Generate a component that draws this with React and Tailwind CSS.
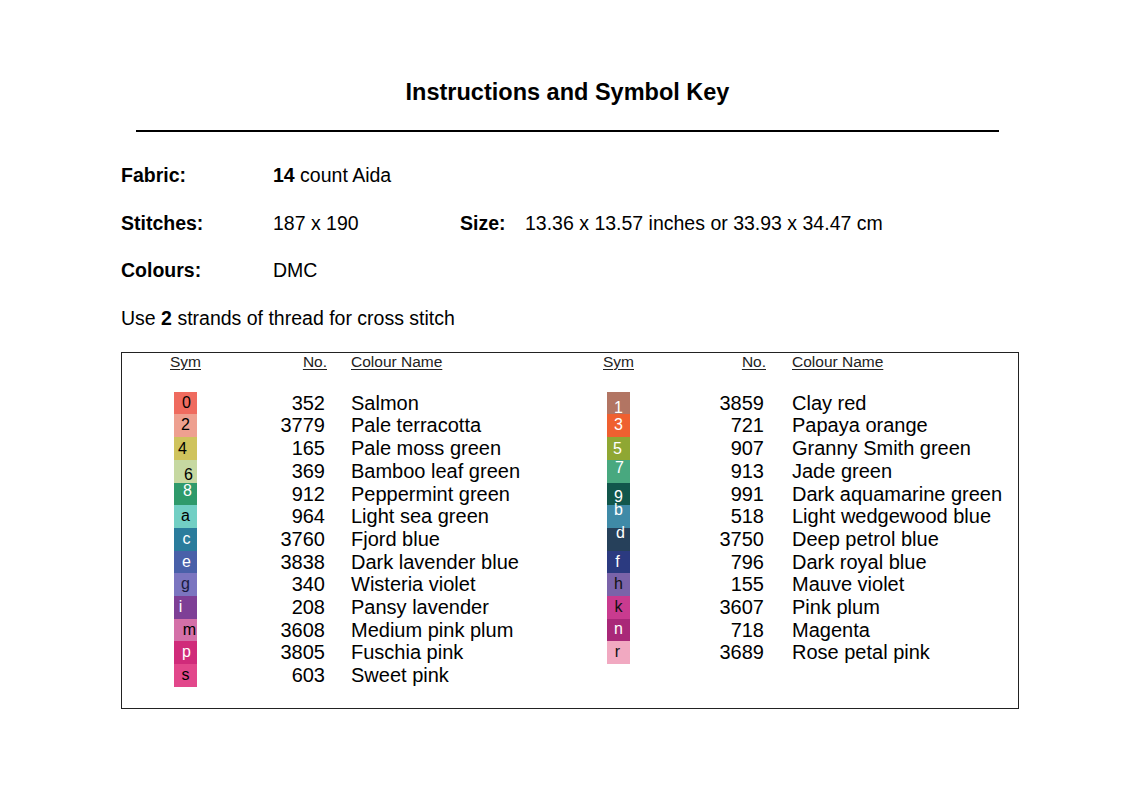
import React from "react";

const left = [
  { s: "0", bg: "bg-[#ef6b5f]", fg: "text-black", n: "352", name: "Salmon", off: "translate-x-[1px]" },
  { s: "2", bg: "bg-[#eea090]", fg: "text-black", n: "3779", name: "Pale terracotta", off: "" },
  { s: "4", bg: "bg-[#cfc35d]", fg: "text-black", n: "165", name: "Pale moss green", off: "-translate-x-[3px] translate-y-[1px]" },
  { s: "6", bg: "bg-[#c6d8a1]", fg: "text-black", n: "369", name: "Bamboo leaf green", off: "translate-x-[3px] translate-y-[4px]" },
  { s: "8", bg: "bg-[#2f9a6b]", fg: "text-white", n: "912", name: "Peppermint green", off: "translate-x-[2px] -translate-y-[3px]" },
  { s: "a", bg: "bg-[#72cfc4]", fg: "text-black", n: "964", name: "Light sea green", off: "" },
  { s: "c", bg: "bg-[#2a7c9c]", fg: "text-white", n: "3760", name: "Fjord blue", off: "translate-x-[1px]" },
  { s: "e", bg: "bg-[#4960a9]", fg: "text-white", n: "3838", name: "Dark lavender blue", off: "translate-x-[1px]" },
  { s: "g", bg: "bg-[#7b75c0]", fg: "text-[#1a1a40]", n: "340", name: "Wisteria violet", off: "" },
  { s: "i", bg: "bg-[#7e3f96]", fg: "text-white", n: "208", name: "Pansy lavender", off: "-translate-x-[5px]" },
  { s: "m", bg: "bg-[#d470a8]", fg: "text-black", n: "3608", name: "Medium pink plum", off: "translate-x-[4px]" },
  { s: "p", bg: "bg-[#d02b7a]", fg: "text-white", n: "3805", name: "Fuschia pink", off: "translate-x-[1px]" },
  { s: "s", bg: "bg-[#e2478b]", fg: "text-black", n: "603", name: "Sweet pink", off: "" },
];

const right = [
  { s: "1", bg: "bg-[#b27563]", fg: "text-white", n: "3859", name: "Clay red", off: "translate-y-[5px]" },
  { s: "3", bg: "bg-[#ef6030]", fg: "text-white", n: "721", name: "Papaya orange", off: "" },
  { s: "5", bg: "bg-[#8fa733]", fg: "text-white", n: "907", name: "Granny Smith green", off: "-translate-x-[1px] translate-y-[1px]" },
  { s: "7", bg: "bg-[#48a87f]", fg: "text-white", n: "913", name: "Jade green", off: "translate-x-[1px] -translate-y-[3px]" },
  { s: "9", bg: "bg-[#11564b]", fg: "text-white", n: "991", name: "Dark aquamarine green", off: "translate-y-[3px]" },
  { s: "b", bg: "bg-[#3f8aa7]", fg: "text-white", n: "518", name: "Light wedgewood blue", off: "-translate-y-[6px]" },
  { s: "d", bg: "bg-[#26405a]", fg: "text-white", n: "3750", name: "Deep petrol blue", off: "translate-x-[2px] -translate-y-[6px]" },
  { s: "f", bg: "bg-[#2b3a80]", fg: "text-white", n: "796", name: "Dark royal blue", off: "-translate-x-[1px]" },
  { s: "h", bg: "bg-[#7a63a9]", fg: "text-[#111]", n: "155", name: "Mauve violet", off: "" },
  { s: "k", bg: "bg-[#c93b8f]", fg: "text-[#111]", n: "3607", name: "Pink plum", off: "" },
  { s: "n", bg: "bg-[#a92878]", fg: "text-white", n: "718", name: "Magenta", off: "-translate-y-[1px]" },
  { s: "r", bg: "bg-[#f1a9c1]", fg: "text-[#111]", n: "3689", name: "Rose petal pink", off: "-translate-x-[1px]" },
];

function KeyColumn({ rows, grid, namePad }) {
  return (
    <div className="flex flex-col w-[400px]">
      <div className={`grid ${grid} text-[15.5px] leading-[17px] text-[#222]`}>
        <div className="flex justify-center">
          <span className="underline underline-offset-2 decoration-1">Sym</span>
        </div>
        <div className="text-right translate-x-[2px]">
          <span className="underline underline-offset-2 decoration-1">No.</span>
        </div>
        <div className={namePad}>
          <span className="underline underline-offset-2 decoration-1">Colour Name</span>
        </div>
      </div>
      <div className="h-[22px]" />
      {rows.map((r) => (
        <div key={r.s} className={`grid ${grid} h-[22.7px] items-stretch`}>
          <div className={`${r.bg} flex items-center justify-center overflow-visible`}>
            <span className={`${r.fg} ${r.off} text-[16px] leading-[22.7px]`}>{r.s}</span>
          </div>
          <div className="text-right text-[20px] leading-[22.7px] text-black">{r.n}</div>
          <div className={`${namePad} text-[20px] leading-[22.7px] text-black whitespace-nowrap`}>{r.name}</div>
        </div>
      ))}
    </div>
  );
}

export default function App() {
  return (
    <div className="w-[1140px] h-[811px] bg-white font-['Liberation_Sans',Arial,sans-serif] text-black overflow-hidden">
      <div className="flex flex-col">
        <div className="ml-[136px] w-[863px] mt-[78px] text-center text-[23.5px] leading-[28px] font-bold">
          Instructions and Symbol Key
        </div>
        <div className="ml-[136px] w-[863px] h-[2px] bg-black mt-[24px]" />

        <div className="ml-[121px] mt-[31px] flex flex-col gap-[23.6px] text-[19.5px] leading-[24px]">
          <div className="flex">
            <span className="w-[152px] font-bold">Fabric:</span>
            <span>
              <b>14</b> count Aida
            </span>
          </div>
          <div className="flex">
            <span className="w-[187px] font-bold">Stitches:</span>
            <span className="w-[187px] -ml-[35px]">187 x 190</span>
            <span className="w-[65px] font-bold">Size:</span>
            <span>13.36 x 13.57 inches or 33.93 x 34.47 cm</span>
          </div>
          <div className="flex">
            <span className="w-[152px] font-bold">Colours:</span>
            <span>DMC</span>
          </div>
          <div>
            Use <b>2</b> strands of thread for cross stitch
          </div>
        </div>

        <div className="ml-[121px] mt-[22px] w-[898px] h-[357px] border-[1.5px] border-[#222] flex">
          <div className="pl-[52px] w-[485px] flex">
            <KeyColumn rows={left} grid="grid-cols-[23px_128px_auto]" namePad="pl-[26px]" />
          </div>
          <div className="flex">
            <KeyColumn rows={right} grid="grid-cols-[23px_134px_auto]" namePad="pl-[28px]" />
          </div>
        </div>
      </div>
    </div>
  );
}
